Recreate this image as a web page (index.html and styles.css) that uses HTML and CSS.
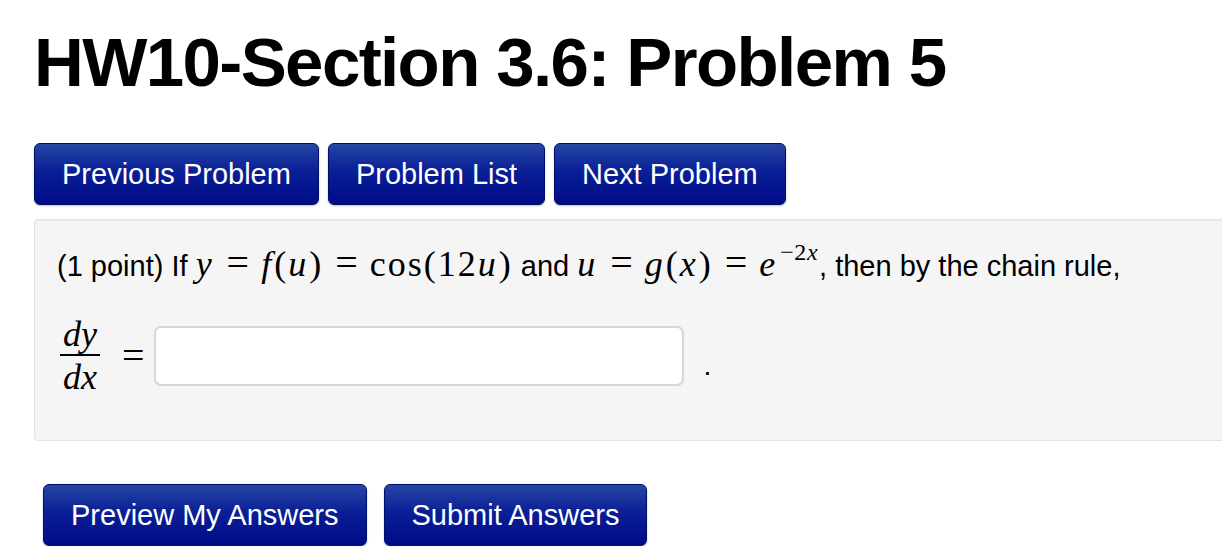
FILE: index.html
```html
<!DOCTYPE html>
<html lang="en">

<head>
    <meta charset="UTF-8" />
    <meta name="viewport" content="width=device-width, initial-scale=1.0" />
    <title>HW10-Section 3.6: Problem 5</title>
    <link rel="stylesheet" href="styles.css">
</head>

<body>
    <h1 class="title">HW10-Section 3.6: Problem 5</h1>

    <div class="nav">
        <a class="btn" href="#">Previous Problem</a>
        <a class="btn" href="#">Problem List</a>
        <a class="btn" href="#">Next Problem</a>
    </div>

    <div class="problem">
        <p class="statement">
            (1 point) If
            <span class="math"><i>y</i><span class="op">=</span><i>f</i>(<i>u</i>)<span class="op">=</span>cos(12<i>u</i>)</span>
            and
            <span class="math"><i>u</i><span class="op">=</span><i>g</i>(<i>x</i>)<span class="op">=</span><i>e</i><sup>&minus;2<i>x</i></sup></span>,
            then by the chain rule,
        </p>
        <div class="answer-row">
            <span class="frac">
                <span class="num">dy</span>
                <span class="den">dx</span>
            </span>
            <span class="eq">=</span>
            <input class="answer" type="text">
            <span class="dot">.</span>
        </div>
    </div>

    <div class="submit">
        <button class="btn">Preview My Answers</button>
        <button class="btn">Submit Answers</button>
    </div>
</body>

</html>
```

FILE: styles.css
```css
html {
    overflow-x: hidden;
}

body {
    margin: 0;
    padding: 23px 0 0 34px;
    font-family: 'Liberation Sans', Arial, sans-serif;
    background-color: #fff;
    color: #000;
}

.title {
    margin: 0;
    font-size: 69px;
    line-height: 80px;
    letter-spacing: -1.6px;
    font-weight: bold;
}

.nav {
    display: flex;
    gap: 9px;
    margin-top: 40px;
}

.btn {
    display: inline-block;
    padding: 12px 27px;
    font-family: 'Liberation Sans', Arial, sans-serif;
    font-size: 29px;
    line-height: 36px;
    color: #fff;
    text-decoration: none;
    background: linear-gradient(180deg, #2646a4 0%, #0a1f96 45%, #000b88 100%);
    border: 1px solid #000f6e;
    border-radius: 6px;
    box-shadow: 0 1px 2px rgba(0, 0, 0, 0.25);
    cursor: pointer;
}

.problem {
    margin: 14px -20px 0 0;
    padding: 18px 22px 0 22px;
    height: 202px;
    background-color: #f5f5f5;
    border: 1px solid #e3e3e3;
    border-radius: 4px;
    box-shadow: inset 0 1px 1px rgba(0, 0, 0, 0.05);
}

.statement {
    margin: 0;
    font-size: 29px;
    line-height: 50px;
}

.math {
    font-family: 'Liberation Serif', 'Times New Roman', serif;
    font-size: 36px;
    letter-spacing: 2px;
}

.math i {
    padding-right: 1px;
}

.math .op {
    padding: 0 12px;
    font-size: 40px;
    letter-spacing: 0;
}

.math sup {
    font-size: 24px;
    line-height: 0;
    position: relative;
    top: -3px;
    padding-left: 2px;
    letter-spacing: 0.5px;
}

.answer-row {
    display: flex;
    align-items: center;
    margin-top: 26px;
}

.frac {
    display: inline-flex;
    flex-direction: column;
    align-items: center;
    font-family: 'Liberation Serif', 'Times New Roman', serif;
    font-style: italic;
    font-size: 36px;
    line-height: 34px;
    margin-left: 3px;
}

.frac .num {
    padding: 0 3px 3px 3px;
    border-bottom: 2px solid #000;
}

.frac .den {
    padding-top: 4px;
}

.eq {
    font-family: 'Liberation Serif', 'Times New Roman', serif;
    font-size: 40px;
    margin: 0 9px 0 22px;
}

.answer {
    width: 530px;
    height: 60px;
    box-sizing: border-box;
    margin: 0;
    border: 2px solid #d6d6d6;
    border-radius: 7px;
    background-color: #fff;
}

.dot {
    font-size: 28px;
    margin: 20px 0 0 20px;
}

.submit {
    display: flex;
    gap: 17px;
    margin: 43px 0 0 9px;
}
```
